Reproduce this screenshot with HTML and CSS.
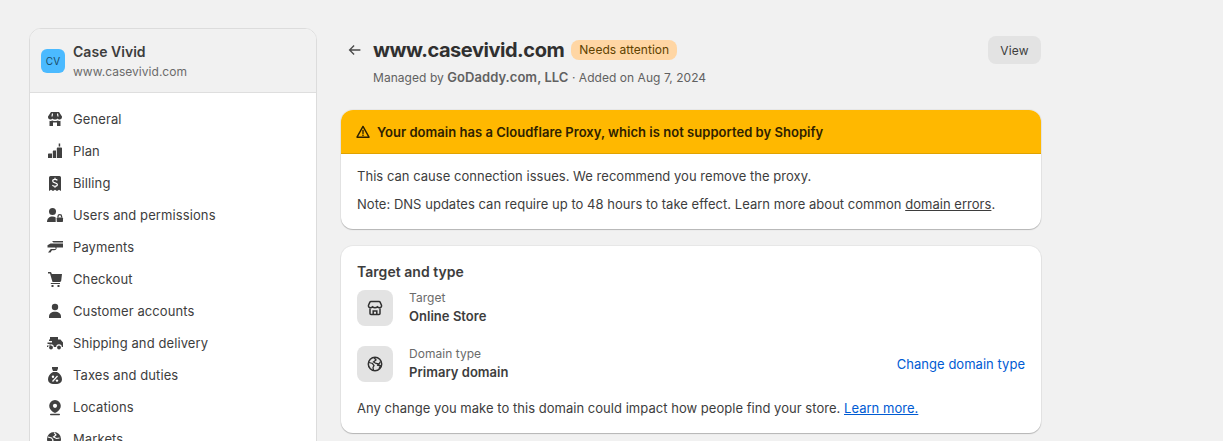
FILE: index.html
```html
<!DOCTYPE html>
<html lang="en">
<head>
  <meta charset="UTF-8" />
  <title>Domain settings</title>
  <link rel="stylesheet" href="styles.css">
</head>
<body>
  <div class="layout">
    <aside class="sidebar">
      <div class="store">
        <div class="avatar">CV</div>
        <div class="store-text">
          <div class="store-name">Case Vivid</div>
          <div class="store-url">www.casevivid.com</div>
        </div>
      </div>
      <nav class="nav">
        <a class="nav-item">
          <svg viewBox="0 0 18 18"><path d="M5 2h8l3 4.5c.2 1.800-1 3-2.300 3-.9 0-1.700-.4-2.100-1-.5.6-1.500 1-2.600 1s-2.100-.4-2.600-1c-.4.6-1.200 1-2.100 1C3 9.500 1.800 8.300 2 6.500z"/><path d="M3.500 10.800c1 .3 2.100.2 3-.3.7.4 1.600.6 2.500.6s1.800-.2 2.500-.6c.9.5 2 .6 3 .3V16h-3.500v-3.500h-4V16H3.500z"/><path class="cut" d="M6.500 3.500 6 6.500M11.500 3.500l.5 3"/></svg>
          General
        </a>
        <a class="nav-item">
          <svg viewBox="0 0 18 18"><path d="M2 12.500c0-.6.400-1 1-1h3V16H2zM6.800 9.500c0-.6.400-1 1-1H10V16H6.800zM10.800 6.500c0-.6.400-1 1-1H15c.6 0 1 .4 1 1V16h-5.200z"/><rect x="12.700" y="1.500" width="1.500" height="3"/></svg>
          Plan
        </a>
        <a class="nav-item">
          <svg viewBox="0 0 18 18"><path d="M4.500 2h9A1.500 1.500 0 0 1 15 3.500V17l-2-1.300-2 1.300-2-1.300L7 17l-2-1.300L3 17V3.500A1.500 1.500 0 0 1 4.500 2z"/><path class="cut" d="M11.400 6.400c-.5-.7-1.300-1.100-2.400-1.100-1.400 0-2.300.7-2.300 1.700 0 2.400 4.700 1.200 4.700 3.600 0 1.100-1 1.700-2.400 1.700-1.100 0-2-.4-2.600-1.200M9 3.800v1.500M9 12.300v1.500"/></svg>
          Billing
        </a>
        <a class="nav-item">
          <svg viewBox="0 0 18 18"><circle cx="6.500" cy="5.500" r="3.500"/><path d="M1 16c0-3.500 2.300-5.500 5.500-5.500 1.300 0 2.400.3 3.200.9V16z"/><rect x="10.700" y="11.500" width="6.300" height="4.500" rx=".8"/><path class="line" d="M12 11.500V10.500a1.800 1.800 0 0 1 3.600 0v1"/></svg>
          Users and permissions
        </a>
        <a class="nav-item">
          <svg viewBox="0 0 18 18"><path d="M6 3h11v1.500H7.500zM4.500 5.500H17v4h-6.500c.5 1.600-.7 2.800-2.500 2.800H6L4.500 14.500H2l2.800-3.500h4c.7 0 1-.3 1-.7s-.4-.7-1-.7H1.500V7.200z"/></svg>
          Payments
        </a>
        <a class="nav-item">
          <svg viewBox="0 0 18 18"><path d="M2 2h2.300c.6 0 1 .3 1.200.9L5.800 4H16l-.8 6.800c-.1.700-.6 1.200-1.300 1.200H6.500L4 3.500H2z"/><rect x="4.800" y="13" width="9.200" height="1"/><rect x="5.500" y="15" width="2" height="2"/><rect x="11.500" y="15" width="2" height="2"/></svg>
          Checkout
        </a>
        <a class="nav-item">
          <svg viewBox="0 0 18 18"><circle cx="9" cy="5" r="3.200"/><path d="M3 16v-1.500c0-2.800 2.500-4.800 6-4.800s6 2 6 4.800V16z"/></svg>
          Customer accounts
        </a>
        <a class="nav-item">
          <svg viewBox="0 0 18 18"><path d="M4 3h8v2.500h2.500L17 8.500V13h-1.200a2.800 2.800 0 0 0-5.600 0H7.800a2.800 2.800 0 0 0-5.600 0H1v-1.500h4V10H1.500V8.500H6V7H3V5.500h1z"/><circle cx="5" cy="13.500" r="1.900"/><circle cx="13" cy="13.500" r="1.900"/></svg>
          Shipping and delivery
        </a>
        <a class="nav-item">
          <svg viewBox="0 0 18 18"><path d="M6 1h6v1.500L11 5H7L6 2.500zM7 6h4c2.800 1.400 5 4.300 5 7.300 0 2.700-1.900 4.700-4.800 4.700H6.800C3.900 18 2 16 2 13.300 2 10.300 4.200 7.400 7 6z"/><path class="cut" d="m11.500 10-5 5.500"/><circle class="hole" cx="7" cy="10.800" r="1.200"/><circle class="hole" cx="11" cy="14.600" r="1.200"/></svg>
          Taxes and duties
        </a>
        <a class="nav-item">
          <svg viewBox="0 0 18 18"><path d="M9 2a5.800 5.800 0 0 1 5.800 5.800c0 2.700-1.800 4.700-3.800 6.300-.7.500-1.300.8-2 1-.7-.2-1.300-.5-2-1-2-1.600-3.800-3.600-3.800-6.300A5.800 5.800 0 0 1 9 2z"/><circle class="hole" cx="9" cy="7.800" r="2.100"/><rect x="4" y="15.700" width="10" height="1.500" rx=".7"/></svg>
          Locations
        </a>
        <a class="nav-item">
          <svg viewBox="0 0 18 18"><circle cx="8" cy="9" r="7"/><path class="cut" d="M2 7l3.500 1 1.500 2-1 2.500M8 2.500l2 2.500-2.500 2 3 1.500 3-.5"/></svg>
          Markets
        </a>
      </nav>
    </aside>

    <main class="main">
      <header class="page-head">
        <svg class="back" viewBox="0 0 20 20"><path d="M16 10H4.500M9 5l-5 5 5 5" fill="none" stroke="currentColor" stroke-width="1.500"/></svg>
        <div class="page-title">
          <div class="title-row">
            <h1>www.casevivid.com</h1>
            <span class="badge">Needs attention</span>
          </div>
          <p class="meta">Managed by <b>GoDaddy.com, LLC</b> · Added on Aug 7, 2024</p>
        </div>
        <button class="view-btn">View</button>
      </header>

      <section class="card banner">
        <div class="banner-head">
          <svg viewBox="0 0 20 20"><path d="M10 3 2.500 16.500h15z" fill="none" stroke="currentColor" stroke-width="1.800" stroke-linejoin="round"/><path d="M10 8v4" stroke="currentColor" stroke-width="1.700" stroke-linecap="round"/><circle cx="10" cy="14.200" r="1" fill="currentColor"/></svg>
          <span>Your domain has a Cloudflare Proxy, which is not supported by Shopify</span>
        </div>
        <div class="banner-body">
          <p>This can cause connection issues. We recommend you remove the proxy.</p>
          <p>Note: DNS updates can require up to 48 hours to take effect. Learn more about common <a class="plain-link">domain errors</a>.</p>
        </div>
      </section>

      <section class="card target">
        <h2>Target and type</h2>
        <div class="row">
          <div class="row-icon"><svg viewBox="0 0 20 20"><path d="M6 3.500h8c.5 0 .9.300 1.100.7l1.400 3c.4 1.400-.6 2.600-1.900 2.600-.9 0-1.700-.4-2.200-1-.6.600-1.400 1-2.400 1s-1.800-.4-2.400-1c-.5.600-1.300 1-2.200 1-1.300 0-2.300-1.200-1.900-2.600l1.400-3c.2-.4.600-.7 1.100-.7z" fill="none" stroke="currentColor" stroke-width="1.500"/><path d="M5 10.500v5c0 .6.400 1 1 1h8c.6 0 1-.4 1-1v-5M8.200 16v-3h3.600v3" fill="none" stroke="currentColor" stroke-width="1.500"/></svg></div>
          <div>
            <div class="row-label">Target</div>
            <div class="row-value">Online Store</div>
          </div>
        </div>
        <div class="row row-last">
          <div class="row-icon"><svg viewBox="0 0 20 20"><circle cx="10" cy="10" r="6.700" fill="none" stroke="currentColor" stroke-width="1.500"/><path d="M4 8.500l3.500 1 1.500 2-1 2 .5 3M9 3.500l2 2.500-2.500 2 2.500 1.500 3 .5 1.500-2.500M12 11l3.500.8-1.500 3" fill="none" stroke="currentColor" stroke-width="1.300"/></svg></div>
          <div class="row-text">
            <div class="row-label">Domain type</div>
            <div class="row-value">Primary domain</div>
          </div>
          <a class="link">Change domain type</a>
        </div>
        <p class="note">Any change you make to this domain could impact how people find your store. <a class="link under">Learn more.</a></p>
      </section>
    </main>
  </div>
</body>
</html>
```

FILE: styles.css
```css
* {
  box-sizing: border-box;
}
html, body {
  height: 100%;
}
body {
  margin: 0;
  background: #f1f1f1;
  color: #3d3d3d;
  font-family: Inter, "Noto Sans", sans-serif;
  font-size: 13px;
  line-height: 20px;
  letter-spacing: 0.03px;
  overflow: hidden;
}
.layout {
  display: flex;
  align-items: flex-start;
  gap: 24px;
  padding: 28px 0 0 29px;
}
.sidebar {
  width: 288px;
  flex-shrink: 0;
  background: #fff;
  border: 1px solid #dcdcdc;
  border-radius: 12px;
  overflow: hidden;
}
.store {
  display: flex;
  align-items: center;
  gap: 8px;
  height: 64px;
  padding: 0 11px;
  background: #f1f1f1;
  border-bottom: 1px solid #dedede;
}
.store-text {
  padding-top: 2px;
}
.avatar {
  width: 24px;
  height: 24px;
  border-radius: 6px;
  background: #4bbaff;
  color: #1a4a66;
  font-size: 10px;
  text-align: center;
  line-height: 24px;
}
.store-name {
  font-size: 14px;
  font-weight: 600;
}
.store-url {
  color: #6b6b6b;
  font-size: 12px;
}
.nav {
  padding: 10px 0 8px;
}
.nav-item {
  display: flex;
  align-items: center;
  gap: 9px;
  height: 32px;
  padding-left: 16px;
  letter-spacing: 0.1px;
}
.nav-item svg {
  width: 18px;
  height: 18px;
  fill: #404040;
  flex-shrink: 0;
}
.nav-item .cut {
  fill: none;
  stroke: #fff;
  stroke-width: 1.2;
}
.nav-item .line {
  fill: none;
  stroke: #404040;
  stroke-width: 1.3;
}
.nav-item .hole {
  fill: #fff;
}
.main {
  width: 700px;
  flex-shrink: 0;
}
.page-head {
  display: flex;
  align-items: flex-start;
  height: 82px;
}
.back {
  width: 18px;
  height: 18px;
  margin: 13px 9px 0 5px;
  color: #4a4a4a;
  flex-shrink: 0;
}
.page-title {
  flex: 1;
  padding-top: 9px;
}
.title-row {
  display: flex;
  align-items: center;
  gap: 7px;
  height: 26px;
}
h1 {
  margin: 0;
  font-size: 20px;
  font-weight: 700;
  letter-spacing: -0.45px;
  color: #303030;
}
.badge {
  background: #ffd6a4;
  color: #5e4200;
  border-radius: 8px;
  padding: 0 8px;
  font-size: 12px;
  line-height: 20px;
}
.meta {
  margin: 6px 0 0;
  color: #616161;
  font-size: 12px;
  line-height: 16px;
  letter-spacing: 0.05px;
}
.meta b {
  font-size: 13px;
  font-weight: 600;
}
.view-btn {
  margin-top: 8px;
  height: 28px;
  width: 53px;
  border: none;
  border-radius: 8px;
  background: #e3e3e3;
  color: #3d3d3d;
  font: 400 12px Inter, sans-serif;
  letter-spacing: 0.2px;
}
.card {
  background: #fff;
  border-radius: 12px;
  box-shadow: 0 1px 1px rgba(0,0,0,0.22), 0 0 0 1px rgba(0,0,0,0.04);
  overflow: hidden;
}
.banner {
  height: 119px;
}
.banner-head {
  display: flex;
  align-items: center;
  gap: 6px;
  height: 44px;
  padding: 0 16px 0 14px;
  background: #ffb800;
  border-bottom: 1px solid #e0a200;
  color: #2e2100;
  font-weight: 600;
  font-size: 13px;
}
.banner-head svg {
  width: 16px;
  height: 16px;
  flex-shrink: 0;
}
.banner-body {
  padding: 12px 16px;
}
.banner-body p {
  margin: 0 0 8px;
}
.plain-link {
  text-decoration: underline;
}
.target {
  margin-top: 17px;
  height: 187px;
  padding: 16px;
}
h2 {
  margin: 0 0 8px;
  font-size: 14px;
  font-weight: 600;
}
.row {
  display: flex;
  align-items: center;
  gap: 16px;
  height: 36px;
  margin-bottom: 20px;
}
.row-last {
  margin-bottom: 16px;
}
.row-icon {
  width: 36px;
  height: 36px;
  border-radius: 8px;
  background: #e3e3e3;
  display: flex;
  align-items: center;
  justify-content: center;
  color: #303030;
}
.row-icon svg {
  width: 20px;
  height: 20px;
}
.row-text {
  flex: 1;
}
.row-label {
  color: #6b6b6b;
  font-size: 12px;
  line-height: 16px;
}
.row-value {
  font-weight: 600;
}
.link {
  color: #005bd3;
}
.under {
  text-decoration: underline;
}
.note {
  margin: 0;
}
```
